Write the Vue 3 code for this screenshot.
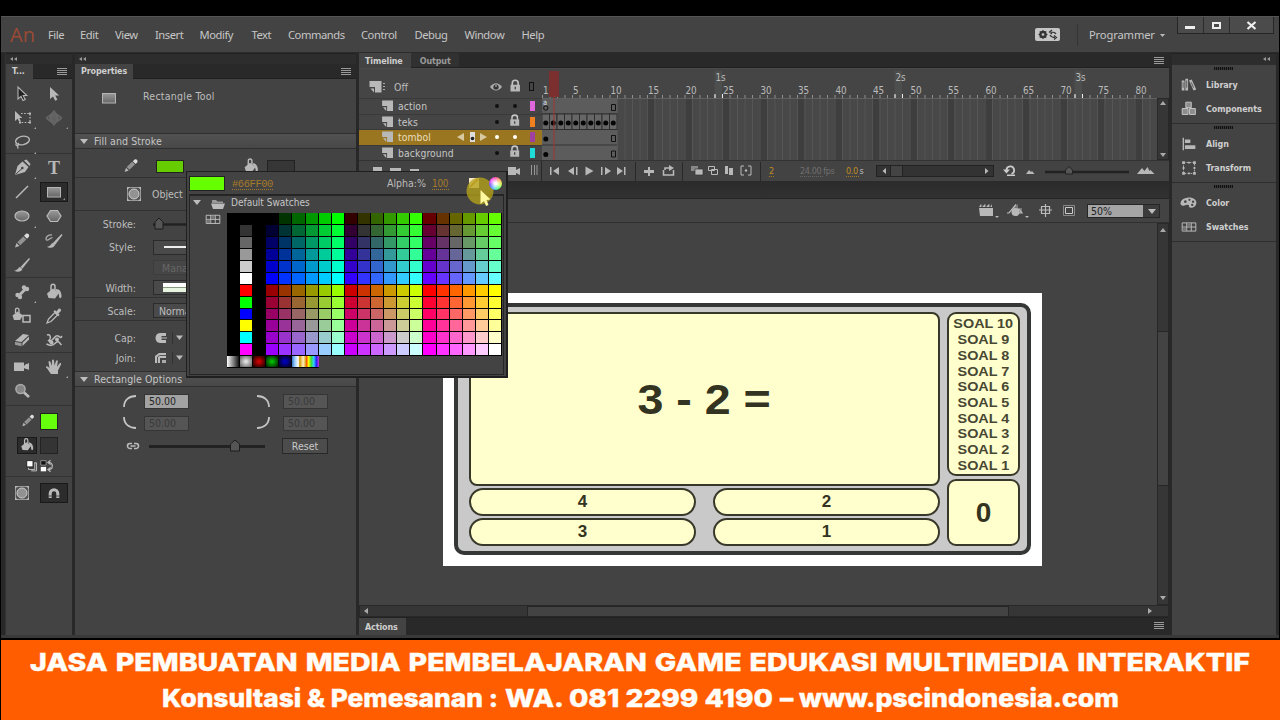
<script setup>
const menu = [
  ['File', 32], ['Edit', 35], ['View', 40], ['Insert', 44.5], ['Modify', 52], ['Text', 36.5],
  ['Commands', 73], ['Control', 53.5], ['Debug', 50], ['Window', 57], ['Help', 30],
]

const g = {
  arrowDark: '<path d="M7 4v12l3-2.6 2 4.1 2.2-1-2-4h3.6z" fill="#222" stroke="#b5b5b5" stroke-width="1.1"/>',
  arrow: '<path d="M7 4v12l3-2.6 2.2 4.4 2.2-1-2.2-4.4h4z"/>',
  transform: '<path d="M4 4v10l2.5-2.2 1.8 3 1.5-.8-1.5-3h3z"/><path d="M10 6.5h9v9H9" fill="none" stroke="#bbb" stroke-width="1.2" stroke-dasharray="1.6 1.5"/><path d="M18 5.5h2v2h-2zM18 14.500h2v2h-2zM8 14.500h2v2H8z"/>',
  rotate: '<g opacity=".25"><circle cx="11" cy="11" r="5.500"/><path d="M3.500 11c3-4.500 12-4.500 15 0-3 4.500-12 4.500-15 0zM11 4c4 4 4 10 0 14-4-4-4-10 0-14z" fill="none" stroke="#ccc" stroke-width="1.400"/></g>',
  lasso: '<ellipse cx="11.500" cy="9.500" rx="7" ry="4.200" transform="rotate(-12 11.500 9.500)" fill="none" stroke="#b8b8b8" stroke-width="1.400"/><path d="M6 12c-2 1-1 3 .8 2.500 1.200-.5 1-2 .2-2.500M6.500 14.500l.5 3.200" fill="none" stroke="#b8b8b8" stroke-width="1.300"/>',
  pen: '<path d="M4 18l2.500-9 5-4.500L17.500 10 14 15z"/><path d="M13 3.500l2.500-1 4 4.500-1 2z"/><path d="M4.500 17.500l6.500-6" stroke="#444" stroke-width="1"/><circle cx="11.300" cy="11" r="1.300" fill="#444"/>',
  text: '<text x="11" y="17" text-anchor="middle" font-family="Liberation Serif,serif" font-size="18" font-weight="bold">T</text>',
  line: '<path d="M5 17L17 5" stroke="#bbb" stroke-width="1.500"/>',
  rect: '<rect x="4.500" y="6.500" width="13" height="9.500" fill="url(#gg)" stroke="#b5b5b5"/>',
  oval: '<ellipse cx="11" cy="11" rx="7" ry="5" fill="url(#gg)" stroke="#bbb" stroke-width="1.200"/>',
  poly: '<path d="M7.500 5.500h7l3.500 5.500-3.500 5.500h-7L4 11z" fill="url(#gg)" stroke="#bbb" stroke-width="1.200"/>',
  pencil: '<path d="M4 17.500l1.500-4.500 3 3z"/><path d="M6.300 12.200l6-5.800 3 3-6 5.800z" fill="#929292"/><path d="M13 5.700l2-1.900c1.800-1.200 4 1.200 2.900 3L16 8.700z" fill="#ddd"/>',
  brushLine: '<path d="M9 14L18.500 4l1 1L12 15z"/><path d="M4 17c5 2 7 0 8-2l-3-2c-1 1-1 3-5 4z"/><path d="M9 5C4 4 2 9 3.500 10c2 1 4-3 6-2" fill="none" stroke="#aaa" stroke-width="1.300"/>',
  brush: '<path d="M9.500 13L18 4l1 1-7.500 9.500z"/><path d="M3 16.800c5 2.200 7.500.2 8.500-1.800l-2.500-2c-1.500 0-1.500 3-6 3.800z"/>',
  bone: '<path d="M7 13.500L13.500 7l2 2L9 15.500z"/><circle cx="13" cy="6.500" r="2.200"/><circle cx="16" cy="8" r="2.200"/><circle cx="6.500" cy="14" r="2.200"/><circle cx="9" cy="16" r="2.200"/>',
  bucket: '<path d="M4 12.500l6-5 6 4.500-4 5.500-6.500-.5z"/><path d="M8 10V5.500c0-3 4-3 4 0v4" fill="none" stroke="#bbb" stroke-width="1.500"/><path d="M13 8c4 0 5 3 5.500 6 .5 4-2.500 4-2.500 1 0-2-1-4-3-5z"/>',
  inkBottle: '<path d="M1.500 10.500l5-4 5.500 4-3 4.500H3z"/><path d="M4.500 8V5c0-2.500 3.500-2.500 3.500 0v3" fill="none" stroke="#bbb" stroke-width="1.300"/><rect x="12" y="10.500" width="7" height="6.500" fill="none" stroke="#bbb" stroke-width="1.500"/>',
  dropper: '<path d="M4 18l1.500-4L12 7.500l2.500 2.500L8 16.500z" fill="none" stroke="#bbb" stroke-width="1.300"/><path d="M10.500 6.500l1.400-1.400 1.500 1.300 2-2.500c1.500-1.200 3.600.8 2.400 2.400l-2.400 2.100 1.300 1.500-1.500 1.400z"/>',
  eraser: '<path d="M4 12L12 5l6 1-7.500 7z"/><path d="M4 13l6.500 1v3.300L4 15.700z" fill="#999"/><path d="M11.500 13.700L18 7.500v3L11.500 17z"/>',
  widthTool: '<path d="M4 6c3-1 4 2 3 4s-1 3 2 1 3-5 6-4 2 3 4 0M3.500 15c4 2 6 2 9-1s4 0 6 2M5 11l4 4" fill="none" stroke="#bbb" stroke-width="1.500"/><circle cx="8.500" cy="13.500" r="2"/><circle cx="14" cy="10.500" r="2"/>',
  camera: '<path d="M3 6.500h10v8.500H3zM13 10l2-2h1l2-1v7l-2-1h-1l-2-1z"/>',
  hand: '<path d="M8 18c-2-2-3-5-5-6.500 0-2 2-1.500 3.500 1L5.500 6c.4-1.500 1.600-1.200 2 0l1.300 4L9 4.500c.3-1.500 1.800-1.500 2 0l.5 5 1.500-4.500c.6-1.300 2-.8 1.800.5L14 10.800l2.500-3.300c1-1 2-.2 1.500 1L15 14.500V18z"/>',
  zoom: '<circle cx="9.500" cy="9" r="4.600" fill="#858585" stroke="#aaa" stroke-width="1.500"/><path d="M13 12.500l5 4.500" stroke="#bbb" stroke-width="2.600"/>',
  object: '<path d="M4.500 4.500h13v13h-13z" fill="#555" stroke="#999"/><circle cx="11" cy="11" r="5" fill="#929292" stroke="#ccc"/><path d="M4 4h3L4 7zM18 4h-3l3 3zM4 18h3l-3-3zM18 18h-3l3-3z"/>',
  magnet: '<path d="M7.200 16v-4.500a3.800 3.800 0 0 1 7.600 0V16" fill="none" stroke="#bbb" stroke-width="3"/><path d="M5.500 14h3.400M13.100 14h3.400" stroke="#333" stroke-width=".8"/>',
  reset: '<rect x="4" y="5" width="7" height="7" fill="#fff" stroke="#222"/><path d="M13 7v8H6v-2M13 7.500h2v9H9" fill="none" stroke="#ccc"/>',
  swap: '<path d="M4 5h6v5H4z" fill="#111" stroke="#999"/><path d="M4 12h6v5H4z" fill="#fff"/><path d="M12 7h2c4 1 4 7 0 8h-2M15 4.500L12 7l3 2.500M15 12.500L12 15l3 2.500" fill="none" stroke="#bbb" stroke-width="1.300"/>',
  library: '<path d="M3 6h3v11H3zM7 4h3v13H7zM11 6l3-1 5 11-3 1z"/><path d="M4.500 8v6M8.500 6v8M13.500 8l2.500 6" stroke="#555"/>',
  components: '<path d="M7.500 3.500h6v6h-6zM3.500 10.500h6.500V17H3.500zM11.500 10.500H18V17h-6.500z" fill="#8d8d8d" stroke="#ccc"/>',
  align: '<path d="M4 4h1.500v14H4zM6.500 6h6v4h-6zM6.500 12.500H18v4H6.500z"/>',
  transformPanel: '<rect x="5" y="5" width="12" height="12" fill="none" stroke="#bbb" stroke-dasharray="2 1.300"/><path d="M3.500 3.500h3v3h-3zM15.500 3.500h3v3h-3zM3.500 15.500h3v3h-3zM15.500 15.500h3v3h-3zM10 4h2v2h-2zM10 16h2v2h-2zM4 10h2v2H4zM16 10h2v2h-2z"/>',
  color: '<path d="M11 5c5 0 9 3 8 7-1 3-4 5-7 4-2-.8 0-2-2-3-3-1-5 3-8 0C.500 9 5 5 11 5z"/><circle cx="7" cy="9.500" r="1.400" fill="#444"/><circle cx="11.500" cy="7.500" r="1.200" fill="#444"/><circle cx="15.500" cy="9.500" r="1.300" fill="#444"/><circle cx="14.500" cy="13" r="1.300" fill="#444"/>',
  swatches: '<path d="M3.500 6.500h15v9h-15z" fill="none" stroke="#c5c5c5"/><path d="M3.500 11h15M8.500 6.500v9M13.500 6.500v9" stroke="#c5c5c5"/><path d="M9 7h4v3.500H9zM4 11.500h4V15H4z" fill="#777"/>',
  layer: '<path d="M4.500 5h12v11.500H10V11H4.500z"/><path d="M5.500 12.500h3.500v4z"/>',
  lock: '<path d="M6 9.500h10.500V17H6z"/><path d="M8 10V7.500c0-4 6.500-4 6.500 0V10" fill="none" stroke="#c4c4c4" stroke-width="1.800"/><path d="M10.600 11.800h1.300v2.800h-1.300z" fill="#333"/>',
  eye: '<path d="M5 11c3.500-5 8.500-5 12 0-3.500 4.500-8.500 4.500-12 0z" fill="#aaa"/><circle cx="11" cy="11" r="2.600" fill="#333"/><circle cx="11" cy="10" r=".8" fill="#ddd"/>',
}

const toolGroups = [
  { cls: 'tg1', items: [['arrowDark'], ['arrow'], ['transform', 1], ['rotate', 1], ['lasso', 1]] },
  { cls: 'tg2', items: [['pen', 1], ['text'], ['line'], ['rect', 1, 1], ['oval', 1], ['poly'], ['pencil'], ['brushLine'], ['brush']] },
  { cls: 'tg3', items: [['bone', 1], ['bucket'], ['inkBottle'], ['dropper'], ['eraser'], ['widthTool']] },
  { cls: 'tg4', items: [['camera'], ['hand', 1], ['zoom']] },
]

const layers = [
  { name: 'action', color: '#e066dc', lock: false },
  { name: 'teks', color: '#f08020', lock: true },
  { name: 'tombol', color: '#a040a0', lock: false, on: true },
  { name: 'background', color: '#20dcd8', lock: true },
]

const FW = 7.5
const frames = Array.from({ length: 82 }, (_, i) => i)
const marks = [1, 5, 10, 15, 20, 25, 30, 35, 40, 45, 50, 55, 60, 65, 70, 75, 80]
const seconds = [[24, '1s'], [48, '2s'], [72, '3s']]

const levels = [0, 51, 102, 153, 204, 255]
const special = ['#000', '#333', '#666', '#999', '#ccc', '#fff', '#f00', '#0f0', '#00f', '#ff0', '#0ff', '#f0f']
const palette = []
for (let r = 0; r < 12; r++) {
  palette.push('#000', special[r], '#000')
  for (let k = 0; k < 3; k++)
    for (let c = 0; c < 6; c++)
      palette.push(`rgb(${levels[(r < 6 ? 0 : 3) + k]},${levels[c]},${levels[r % 6]})`)
}

const dock = [
  [['library', 'Library'], ['components', 'Components']],
  [['align', 'Align'], ['transformPanel', 'Transform']],
  [['color', 'Color'], ['swatches', 'Swatches']],
]
const soal = [10, 9, 8, 7, 6, 5, 4, 3, 2, 1]
</script>

<template>
  <div class="screen">
    <svg class="defs"><defs><linearGradient id="gg" x2="0" y2="1"><stop stop-color="#999" /><stop offset="1" stop-color="#666" /></linearGradient></defs></svg>
    <div class="window">
      <header class="menubar">
        <span class="logo">An</span>
        <nav><span v-for="m in menu" :key="m[0]" :style="{ width: m[1] + 'px' }">{{ m[0] }}</span></nav>
        <svg class="sync" width="25" height="13"><rect width="25" height="13" rx="2" fill="#c4c4c4" /><circle cx="8" cy="6.500" r="2.800" fill="none" stroke="#333" stroke-width="2" /><path d="M8 2v9M3.500 6.500h9M4.800 3.300l6.400 6.400M11.200 3.300l-6.400 6.400" stroke="#333" stroke-width="1.100" /><circle cx="8" cy="6.500" r="1.300" fill="#c4c4c4" /><path d="M21 6c-1-2-3-2-5-2M17 2l-2.500 2L17 6M15 7c1 2 3 2.500 5 2.500M19 7.500l2.500 2-2.500 2" stroke="#333" stroke-width="1.200" fill="none" /></svg>
        <i class="vsep"></i>
        <span class="workspace">Programmer</span>
        <svg class="wsarrow" width="6" height="4"><path d="M0 0h5L2.500 3z" fill="#bbb" /></svg>
        <div class="winbtns">
          <svg width="25" height="16"><path d="M7 9h10v3H7z" fill="#eee" /></svg>
          <svg width="26" height="16"><rect x="9" y="6" width="7" height="5" fill="none" stroke="#eee" stroke-width="2" /></svg>
          <svg width="44" height="16"><path d="M17.500 5l8 7M25.500 5l-8 7" stroke="#eee" stroke-width="2.200" /></svg>
        </div>
      </header>

      <main>
        <aside class="tools">
          <div class="strip"><svg width="8" height="6"><path d="M3 1v4L0 3zM7 1v4L4 3z" fill="#999" /></svg></div>
          <div class="tabs"><b class="tab t0">T...</b><i class="burger"></i></div>
          <div v-for="grp in toolGroups" :key="grp.cls" class="tgroup" :class="grp.cls">
            <span v-for="t in grp.items" :key="t[0]" class="tool" :class="{ sel: t[2], more: t[1] }"><svg width="22" height="22" v-html="g[t[0]]"></svg></span>
          </div>
          <div class="colors">
            <div class="crow"><svg width="18" height="18" viewBox="0 0 22 22" v-html="g.pencil"></svg><i class="csw green"></i></div>
            <div class="crow"><span class="bsel"><svg width="18" height="18" viewBox="0 0 22 22" v-html="g.bucket"></svg></span><i class="csw none"></i></div>
            <div class="crow small"><svg width="16" height="16" viewBox="2 2 18 18" v-html="g.reset"></svg><svg width="16" height="16" viewBox="2 2 18 18" v-html="g.swap"></svg></div>
          </div>
          <div class="tgroup tg5">
            <span class="tool"><svg width="22" height="22" v-html="g.object"></svg></span>
            <span class="tool sel"><svg width="22" height="22" v-html="g.magnet"></svg></span>
          </div>
        </aside>

        <aside class="props">
          <div class="strip"><svg width="8" height="6"><path d="M3 1v4L0 3zM7 1v4L4 3z" fill="#999" /></svg></div>
          <div class="tabs"><b class="tab">Properties</b><i class="burger"></i></div>
          <div class="prow title"><svg width="22" height="22" v-html="g.rect"></svg><span>Rectangle Tool</span></div>
          <div class="section"><i class="tri"></i>Fill and Stroke</div>
          <div class="prow fill">
            <svg width="20" height="20" viewBox="0 0 22 22" v-html="g.pencil"></svg><i class="chip lime"></i>
            <svg class="bk" width="20" height="20" viewBox="0 0 22 22" v-html="g.bucket"></svg><i class="chip"></i>
          </div>
          <div class="prow object"><svg width="22" height="22" v-html="g.object"></svg><span>Object</span></div>
          <div class="prow r-stroke"><label>Stroke:</label><svg class="ctl" width="60" height="14"><path d="M0 7.500h60" stroke="#222" stroke-width="2.500" /><path d="M2 12V5l4-4 4 4v7z" fill="#555" stroke="#1d1d1d" /></svg></div>
          <div class="prow r-style"><label>Style:</label><span class="ctl box"><i class="wline"></i></span></div>
          <div class="prow r-man"><label></label><span class="ctl box dim">Manage</span></div>
          <div class="prow r-width"><label>Width:</label><span class="ctl box"><i class="wline thick"></i></span></div>
          <div class="prow r-scale"><label>Scale:</label><span class="ctl box">Normal</span></div>
          <div class="prow r-cap"><label>Cap:</label><svg class="ctl2" width="34" height="12"><path d="M13 1H7C1 1 1 11 7 11h6V8H8.500V4H13z" fill="#bbb" /><path d="M7 6h7" stroke="#bbb" /><path d="M19.500 0v12" stroke="#333" /><path d="M23 3.500h7L26.500 8z" fill="#bbb" /></svg></div>
          <div class="prow r-join"><label>Join:</label><svg class="ctl2" width="34" height="12"><path d="M13 1H6L2 4v7h5V6h6z" fill="#bbb" /><path d="M4.500 11V5l2-1.500H13" fill="none" stroke="#555" /><path d="M9 8h4v3H9z" fill="#aaa" /><path d="M19.500 0v12" stroke="#333" /><path d="M23 3.500h7L26.500 8z" fill="#bbb" /></svg></div>
          <div class="section sec2"><i class="tri"></i>Rectangle Options</div>
          <div class="prow corner c1"><svg width="16" height="14"><path d="M2 13C2 6 7 2 14 2" /></svg><span class="num on">50.00</span><svg class="rt" width="16" height="14"><path d="M1 2c7 0 12 4 12 11" /></svg><span class="num">50.00</span></div>
          <div class="prow corner"><svg width="16" height="14"><path d="M2 1c0 7 5 11 12 11" /></svg><span class="num">50.00</span><svg class="rt" width="16" height="14"><path d="M1 12c7 0 12-4 12-11" /></svg><span class="num">50.00</span></div>
          <div class="prow link">
            <svg width="14" height="8"><path d="M6 1.500H4a2.300 2.300 0 0 0 0 5h2M8 1.500h2a2.300 2.300 0 0 1 0 5H8M4.500 4h5" fill="none" stroke="#bbb" stroke-width="1.600" /></svg>
            <svg class="sl" width="116" height="14"><path d="M0 7.500h116" stroke="#222" stroke-width="2.800" /><path d="M81.500 12V5l4.500-4 4.500 4v7z" fill="#555" stroke="#1d1d1d" /></svg>
            <span class="btn">Reset</span>
          </div>
        </aside>

        <section class="center">
          <div class="tabs ctabs"><b class="tab">Timeline</b><b class="tab off">Output</b><i class="burger"></i></div>
          <div class="timeline">
            <div class="layers">
              <div class="lhead"><svg width="22" height="22" viewBox="0 0 22 22" v-html="g.layer"></svg><i class="dots"></i><span>Off</span><svg class="eyeh" width="22" height="22" v-html="g.eye"></svg><svg class="lk" width="18" height="18" viewBox="1 2 20 20" v-html="g.lock"></svg><i class="outl"></i></div>
              <div v-for="l in layers" :key="l.name" class="layer" :class="{ on: l.on }">
                <svg class="lico" width="20" height="20" viewBox="0 0 22 22" v-html="g.layer"></svg><span class="lname">{{ l.name }}</span>
                <svg v-if="l.on" class="keys" width="30" height="12"><path d="M0 6l7-4v8zM30 6l-7-4v8z" fill="#d8c9a0" /><path d="M13 1h5v10h-5z" fill="#ddd" /><circle cx="15.500" cy="7.500" r="1.800" fill="#222" /></svg>
                <i class="dot d1"></i>
                <svg v-if="l.lock" class="lk2" width="17" height="17" viewBox="1 2 20 20" v-html="g.lock"></svg><i v-else class="dot d2"></i>
                <i class="lcol" :style="{ background: l.color }"></i>
              </div>
            </div>
            <svg class="frames" width="615" height="92">
              <rect v-for="s in seconds" :key="s[1]" :x="(s[0] - 1) * FW" y="2" :width="FW" height="27" fill="#4c4f4d" />
              <rect v-for="f in frames" :key="f" :x="f * FW" y="29" :width="FW" height="63" :fill="(f + 1) % 5 ? '#484848' : '#3e3e3e'" />
              <path v-for="f in frames" :key="'l' + f" :d="`M${f * FW + .5} 30v61`" stroke="#595959" stroke-width=".8" />
              <path v-for="f in frames" :key="'t' + f" :d="`M${f * FW + .5} 26v3`" stroke="#999" stroke-width=".9" />
              <path v-for="s in seconds" :key="'w' + s[1]" :d="`M${(s[0] - 1) * FW + .5} 25v4m7.500-4v4`" stroke="#eee" />
              <path d="M0 29.500h615M0 91.500h615" stroke="#606060" />
              <rect y="30" width="75" height="61" fill="#5c5c5c" />
              <path d="M0 45h75M0 60.500h75M0 76h75" stroke="#343434" />
              <g v-for="i in 10" :key="i"><rect :x="(i - 1) * FW" y="45" :width="FW" height="15.500" fill="#666" stroke="#2c2c2c" stroke-width=".9" /><circle :cx="(i - .5) * FW" cy="54" r="2.500" fill="#050505" /></g>
              <circle cx="3.800" cy="39" r="2.200" fill="none" stroke="#111" /><text x="1" y="36" class="act">a</text>
              <circle cx="3.800" cy="70" r="2.500" fill="#050505" /><circle cx="3.800" cy="85.500" r="2.500" fill="#050505" />
              <path d="M69.500 35.500h4v6h-4zM69.500 66.500h4v6h-4zM69.500 82h4v6h-4z" fill="none" stroke="#111" />
              <rect x="7" y="2" width="10" height="26" fill="#7c2f2f" /><path d="M12 27v65" stroke="#a23434" />
              <text v-for="m in marks" :key="m" :x="(m - 1) * FW + 1" y="25">{{ m }}</text>
              <text v-for="s in seconds" :key="'s' + s[1]" :x="(s[0] - 1) * FW + 1" y="11.500">{{ s[1] }}</text>
            </svg>
            <div class="tlscroll"><i class="up"></i><i class="down"></i></div>
          </div>
          <div class="tlbar">
            <svg width="810" height="21" fill="#bbb">
              <path d="M14 6h9v7h-9zM31 7h11v7H31zM51 8h9v6h-9zM149 6h8v8h-8zM157 9l4-2v7l-4-2z" />
              <path d="M175.500 4v10M178.500 4v10M181 4v10" stroke="#999" transform="translate(-3 0)" /><path d="M182.500 0v21M276.500 1v19M323.500 1v19M401.500 1v19" stroke="#292929" />
              <path d="M191 6h1.500v8H191zM200 6v8l-6-4zM209 10l6-4v8zM217 6h1.500v8H217zM226.500 5.500l8 4.500-8 4.500zM242 6h1.500v8H242zM246 6v8l6-4zM258 6v8l6-4zM265 6h1.500v8H265z" />
              <path d="M285 9h4V6h2v3h4v3h-4v3h-2v-3h-4z" /><path d="M304.500 9v5h10V9M306 9V7h5" fill="none" stroke="#bbb" stroke-width="1.500" /><path d="M310 4l5 3-5 3z" />
              <path d="M332 5h7v5h-7z" fill="#888" /><path d="M336 8h8v6h-8z" stroke="#333" stroke-width=".7" /><path d="M349.500 5.500h6v4h-6zM352.500 8.500h6v5h-6z" fill="none" stroke="#bbb" /><path d="M366 5h3v8h-3zM370 7h4v7h-4z" /><path d="M385 5h-3v9h3M389 5h3v9h-3" fill="none" stroke="#bbb" /><circle cx="387" cy="9.500" r="1.200" />
              <text x="410" y="13" class="or">2</text><path d="M410 15.500h6" stroke="#a77a1e" stroke-dasharray="1 1" />
              <text x="441" y="13" class="fps">24.00 fps</text><path d="M441 15.500h24" stroke="#666" stroke-dasharray="1 1" />
              <text x="487" y="13" class="or">0.0</text><text x="500.500" y="13" class="s">s</text><path d="M487 15.500h13" stroke="#a77a1e" stroke-dasharray="1 1" />
              <rect x="517.500" y="4.500" width="117" height="11" fill="#333" stroke="#222" /><rect x="531.500" y="4.500" width="12" height="11" fill="#444" stroke="#222" /><path d="M527 7v6l-3.500-3zM626 7v6l3.500-3z" />
              <path d="M647.500 9a3.800 3.800 0 1 1 5 3.800" fill="none" stroke="#ccc" stroke-width="1.800" /><path d="M644 8.500h7l-3.500 4zM648 13.500h8V15h-8z" fill="#ccc" />
              <path d="M667 13l3-4 2 2 1-1 2.500 3zM778 13l5-6 2.500 3 3-4 2 4 1-1 4 4z" /><path d="M686 11h84" stroke="#222" stroke-width="2.500" /><path d="M706.500 13V9l3.500-3.500L713.500 9v4z" fill="#555" stroke="#222" />
            </svg>
          </div>
          <div class="docbar"></div>
          <div class="editbar">
            <svg width="106" height="20" fill="#bbb"><path d="M2 7h14v8H3zM2 6l2-3 2 2 2-2 2 2 2-2 2 2 1-2v3z" /><path d="M18 15h4l-2 2zM48 15h4l-2 2z" /><path d="M5 3.500v3M9 3.500v3M13 3.500v3" stroke="#333" /><path d="M36 6l5-3v4h4v5h-5z" fill="#777" /><circle cx="38.500" cy="11" r="4" /><path d="M39 3.500l-7 8.500h-2M42 8l3 4h-3" fill="none" stroke="#bbb" stroke-width="1.200" /><path d="M62 9h13M68.500 3v13M64.500 5.500h8v7h-8z" fill="none" stroke="#bbb" stroke-width="1.200" /><path d="M86.500 4.500h11v10h-11z" fill="none" stroke="#888" /><path d="M88.500 6.500h7v6h-7z" fill="none" stroke="#ccc" /></svg>
            <div class="zoomsel"><span>50%</span><i class="tri"></i></div>
          </div>
          <div class="work">
            <div class="viewport">
              <div class="stage"><div class="device">
                <div class="left">
                  <div class="question"><span>3 - 2 =</span></div>
                  <div class="answers"><span>4</span><span>2</span><span>3</span><span>1</span></div>
                </div>
                <div class="side">
                  <div class="list"><span v-for="n in soal" :key="n">SOAL {{ n }}</span></div>
                  <div class="score">0</div>
                </div>
              </div></div>
            </div>
            <div class="vscroll"><i class="up"></i><i class="thumb"></i><i class="down"></i></div>
          </div>
          <div class="hscroll"><i class="lt"></i><i class="thumb"></i><i class="rt"></i></div>
          <div class="tabs atabs"><b class="tab">Actions</b><i class="burger"></i></div>
        </section>

        <aside class="dock">
          <div class="strip"><svg width="8" height="6"><path d="M3 1v4L0 3zM7 1v4L4 3z" fill="#999" /></svg></div>
          <div v-for="(d, i) in dock" :key="i" class="dgroup">
            <i class="grip"></i>
            <div v-for="p in d" :key="p[0]" class="ditem"><svg width="20" height="20" viewBox="0 0 22 22" v-html="g[p[0]]"></svg><b>{{ p[1] }}</b></div>
          </div>
        </aside>
      </main>
    </div>

    <div class="popup">
      <div class="phead"><i class="current"></i><span class="hex">#66FF00</span><span class="alpha">Alpha:%</span><span class="hex a100">100</span>
        <svg width="32" height="16"><rect x="2" y="3" width="10" height="10" fill="#f5e5c0" /><path d="M3 12l8-8" stroke="#d07020" stroke-width="1.500" /></svg></div>
      <div class="pbody">
        <div class="pfolder"><i class="tri"></i><svg width="14" height="11"><path d="M1 2h4l1.500 1.500H12V5H1z" fill="#999" /><path d="M0 5.500h14L12 11H2z" fill="#bbb" /></svg><span>Default Swatches</span></div>
        <div class="pgrid">
          <svg width="20" height="20" viewBox="0 4 22 22" v-html="g.swatches"></svg>
          <div>
            <div class="palette"><i v-for="(c, i) in palette" :key="i" :style="{ background: c }"></i></div>
            <div class="grads"><i v-for="n in 7" :key="n" :class="'g' + n"></i></div>
          </div>
        </div>
      </div>
      <svg class="cursor" width="28" height="34"><circle cx="14" cy="14" r="13.500" fill="#b5a31a" fill-opacity=".78" /><path d="M14.500 13v14l3.500-3 2 5 2.500-1-2-5 4-.5z" fill="#fff9a0" /></svg>
      <i class="wheel"></i>
    </div>

    <footer>
      <svg width="1279" height="80">
        <text x="29" y="31" textLength="1220" lengthAdjust="spacingAndGlyphs" class="wide">JASA PEMBUATAN MEDIA PEMBELAJARAN GAME EDUKASI MULTIMEDIA INTERAKTIF</text>
        <text x="161" y="67" textLength="336" lengthAdjust="spacingAndGlyphs">Konsultasi &amp; Pemesanan :</text>
        <text x="504" y="67" textLength="268" lengthAdjust="spacingAndGlyphs">WA. 081 2299 4190</text>
        <text x="779" y="67" textLength="339" lengthAdjust="spacingAndGlyphs">– www.pscindonesia.com</text>
      </svg>
    </footer>
  </div>
</template>

<style>
body { margin: 0; background: #000; overflow: hidden; }
</style>

<style scoped>
* { box-sizing: border-box; }
.screen { position: relative; width: 1280px; height: 720px; background: #000; padding-top: 16px; overflow: hidden; color: #c6c6c6; font: 10.5px/14px "DejaVu Sans Condensed", "DejaVu Sans", sans-serif; font-stretch: condensed; }
.defs { position: absolute; width: 0; height: 0; }
svg { display: block; flex: none; overflow: visible; fill: #b8b8b8; }
i { flex: none; display: block; }
span, b { white-space: nowrap; }
.window { margin-left: 1px; width: 1278px; height: 621px; background: #434343; border-top: 1px solid #555; }
.menubar { height: 36px; display: flex; align-items: center; position: relative; border-bottom: 1px solid #2b2b2b; font: 11.2px/18px "Noto Sans", sans-serif; letter-spacing: -.45px; }
.logo { width: 47px; padding-left: 9px; color: #9a4a35; font: 500 20px/24px "Open Sans", sans-serif; letter-spacing: 0; }
nav { display: flex; width: 987px; }
.vsep { width: 1px; height: 22px; margin: 0 11px 0 17px; background: #333; }
.workspace { letter-spacing: -.15px; width: 61px; }
.wsarrow { margin: 3px 0 0 10px; }
.winbtns { position: absolute; top: 0; right: 5px; display: flex; border: 1px solid #252525; border-top: 0; background: #4b4b4b; }
.winbtns svg + svg { border-left: 1px solid #2c2c2c; }
main { display: flex; height: 585px; padding-left: 4px; background: #282828; gap: 3px; border-bottom: 3px solid #393939; }
.strip { height: 11px; background: #2d2d2d; border-top: 1px solid #222; padding: 2px 0 0 4px; }
.tabs { display: flex; height: 15px; background: #292929; align-items: stretch; border-bottom: 1px solid #202020; }
.tab { background: #434343; padding: 0 8px 0 6px; height: 16px; font-size: 8.9px; line-height: 15px; color: #cfcfcf; letter-spacing: -.1px; }
.props .tab { width: 58px; }
.burger { margin: 4px 5px 0 auto; width: 10px; height: 7px; background: repeating-linear-gradient(#9a9a9a 0 1px, transparent 1px 2px); }
.tools, .props { background: #434343; }
.tools { width: 67px; border-left: 1px solid #333; }
.tools .t0 { width: 27px; padding: 0 0 0 6px; }
.tgroup { display: grid; grid-template-columns: 32px 32px; grid-auto-rows: 24.2px; border-bottom: 1px solid #333; }
.tg1 { padding: 3px 0 0; height: 75px; }
.tg2 { padding-top: 2px; height: 124px; }
.tg3 { padding-top: 2px; height: 75px; }
.tg4 { padding-top: 2px; height: 53px; }
.tg5 { padding-top: 4px; border: 0; }
.tool { display: flex; align-items: center; justify-content: center; position: relative; }
.tool.sel { background: #2c2c2c; border: 1px solid #191919; width: 28px; height: 20px; margin: 2px 0 0 2px; }
.tool.more::after { content: ""; position: absolute; right: 2px; bottom: 1px; border: 1.5px solid transparent; border-right-color: #aaa; border-bottom-color: #aaa; }
.tool.more:nth-child(4)::after { opacity: .8; }
.colors { height: 71px; border-bottom: 1px solid #333; padding: 3px 0 0 11px; }
.crow { display: flex; height: 24px; align-items: center; }
.crow > svg { margin: 0 2px 0 2px; }
.csw { width: 18px; height: 17px; border: 1px solid #222; background: #343434; }
.green { background: #66ff0c; }
.crow > i { margin-left: 1px; }
.bsel { width: 20px; height: 17px; display: flex; align-items: center; justify-content: center; background: #2c2c2c; border: 1px solid #191919; margin-right: 2px; }
.small { height: 18px; padding-left: 8px; }
.small > svg { margin: 0 -2px 0 0; }

.props { width: 281px; }
.prow { display: flex; align-items: center; color: #bdbdbd; font-size: 10.5px; }
.title { height: 54px; padding: 0 0 21px 23px; letter-spacing: .25px; }
.title svg { margin-top: 4px; }
.title span { margin-left: 23px; }
.section { height: 16px; display: flex; align-items: center; gap: 6px; padding-left: 5px; background: linear-gradient(#515151, #484848); border: 1px solid #2f2f2f; border-width: 1px 0; color: #c6c6c6; font-size: 10.5px; letter-spacing: .1px; }
.tri { width: 0; height: 0; border: 4px solid transparent; border-top: 5px solid #bdbdbd; border-bottom: 0; }
.fill { height: 29px; padding: 6px 0 0 46px; border-bottom: 1px solid #313131; }
.chip { width: 28px; height: 13px; margin-left: 16px; background: #363636; border: 1px solid #222; }
.lime { background: #66cc00; margin-left: 15px; }
.bk { margin-left: 57px; }
.fill .chip:last-child { margin-left: 6px; }
.object { height: 33px; padding-left: 48px; border-bottom: 1px solid #313131; }
.object span { margin-left: 7px; }
label { width: 61px; text-align: right; margin-right: 17px; }
.box { width: 62px; height: 15px; border: 1px solid #2b2b2b; background: #4a4a4a; padding-left: 5px; line-height: 14px; display: flex; align-items: center; }
.dim { color: #666; border-color: #3c3c3c; padding-left: 8px; background: #464646; }
.r-stroke { height: 26px; } .r-style { height: 20px; } .r-man { height: 21px; }
.r-width { height: 20px; border-bottom: 1px solid #313131; }
.r-scale { height: 23px; border-bottom: 1px solid #313131; padding-top: 3px; }
.r-cap { height: 28px; padding-top: 6px; } .r-join { height: 22px; padding-bottom: 5px; }
.wline { width: 60px; height: 2px; margin-left: 5px; background: #eee; }
.thick { height: 9px; background: linear-gradient(#fff 0 4px, #8a9a80 4px 5px, #e8f5e0 5px); margin-left: 4px; }
.corner { height: 22px; padding-left: 47px; }
.c1 { margin-top: 3px; }
.corner svg path { fill: none; stroke: #c4c4c4; stroke-width: 1.8; }
.num { width: 45px; height: 15px; border: 1px solid #353535; background: #555; color: #3a3a3a; margin-left: 6px; padding-left: 4px; line-height: 13px; }
.num.on { background: #a2a2a2; color: #252525; }
.rt { margin-left: 67px; }
.corner .num:last-child { margin-left: 11px; }
.link { height: 24px; padding-left: 51px; }
.sl { margin-left: 9px; }
.btn { margin-left: 17px; width: 46px; height: 16px; border: 1px solid #282828; background: #4c4c4c; text-align: center; line-height: 14px; color: #c8c8c8; }

.center { width: 810px; display: flex; flex-direction: column; background: #434343; }
.ctabs .tab { line-height: 17px; }
.tab.off { background: #313131; color: #999; padding-left: 9px; height: 14px; }
.timeline { display: flex; height: 92px; border-top: 1px solid #4a4a4a; background: #454545; }
.layers { width: 183px; }
.lhead { height: 29px; display: flex; align-items: center; padding: 6px 0 0 6px; color: #bbb; font-size: 10.5px; }
.dots { width: 2px; height: 8px; background: repeating-linear-gradient(#aaa 0 1px, transparent 1px 3px); margin: 0 9px 0 -4px; }
.eyeh { margin-left: 75px; }
.lhead span { width: 16px; }
.lk { margin-left: -1px; }
.outl { width: 5px; height: 9px; border: 1px solid #111; margin-left: 5px; }
.layer { height: 15.500px; display: flex; align-items: center; border-top: 1px solid #3a3a3a; position: relative; color: #c6c6c6; font-size: 10.3px; padding-left: 19px; }
.layer.on { background: #9a7620; color: #e9dfbf; }
.lname { width: 57px; letter-spacing: .1px; }
.dot { width: 4px; height: 4px; border-radius: 2px; background: #111; }
.on .dot { background: #fff; }
.keys { margin-right: -32px; margin-left: 2px; }
.d1 { margin-left: 40px; }
.d2 { margin: 0 6px 0 14px; }
.lk2 { margin: 0 0 0 7px; }
.layer .lcol { margin-left: 7px; width: 5px; height: 10px; }
.layer .lk2 + .lcol { margin-left: 7px; }
.frames { width: 615px; overflow: hidden; }
.frames text { font: 9.8px "DejaVu Sans Condensed", "DejaVu Sans", sans-serif; fill: #bbb; }
.frames .act { font-size: 7.5px; fill: #d5e0ee; }
.tlscroll { margin-top: 29px; width: 12px; background: #363636; border: 1px solid #292929; display: flex; flex-direction: column; justify-content: space-between; align-items: center; padding: 2px; }
.up, .down, .lt, .hscroll .rt { width: 0; height: 0; border: 3px solid transparent; margin: 0; }
.up { border-top: 0; border-bottom: 4px solid #aaa; }
.down { border-bottom: 0; border-top: 4px solid #aaa; }
.lt { border-left: 0; border-right: 4px solid #aaa; }
.hscroll .rt { border-right: 0; border-left: 4px solid #aaa; }
.tlbar { height: 21px; border-top: 1px solid #333; }
.tlbar text { font: 9px "DejaVu Sans Condensed", "DejaVu Sans", sans-serif; letter-spacing: -.4px; }
.tlbar .or { fill: #c08a22; } .tlbar .fps { fill: #707070; } .tlbar .s { fill: #bbb; }
.docbar { height: 18px; background: linear-gradient(#2b2b2b, #313131); border-bottom: 1px solid #252525; }
.editbar { height: 24px; display: flex; align-items: center; border-bottom: 1px solid #303030; padding: 1px 0 0 618px; }
.zoomsel { display: flex; align-items: center; width: 73px; height: 14px; border: 1px solid #262626; background: #3c3c3c; margin-left: 4px; color: #222; }
.zoomsel span { background: #a5a5a5; width: 55px; padding-left: 3px; line-height: 12px; }
.zoomsel i { margin-left: 5px; }
.work { flex: 1; display: flex; min-height: 0; }
.viewport { flex: 1; padding: 70px 0 0 84px; }
.stage { width: 599px; height: 273px; background: #fff; padding: 10px 0 0 11px; }
.device { width: 577px; height: 252px; border: 4px solid #353737; border-radius: 10px; background: #c9c9c9; padding: 5px 7px 5px 11px; display: flex; justify-content: space-between; color: #333322; font-family: "Liberation Sans", Arial, sans-serif; font-weight: bold; font-stretch: normal; }
.left { width: 471px; }
.question, .answers span, .list, .score { background: #ffffce; border: 2px solid #38382a; display: flex; align-items: center; justify-content: center; }
.question { height: 174px; border-radius: 8px; font-size: 42px; padding-top: 1px; }
.question span { transform: scaleX(1.11); }
.answers { display: grid; grid-template-columns: 227px 227px; grid-auto-rows: 28px; gap: 2px 17px; margin-top: 2px; }
.answers span { border-radius: 14px; font-size: 17px; }
.side { width: 73px; }
.list { height: 164px; border-radius: 9px; flex-direction: column; font-size: 13.600px; line-height: 15.700px; color: #474733; padding-top: 2px; }
.list span { transform: scaleX(1.06); }
.score { height: 67px; border-radius: 9px; margin-top: 3px; font-size: 28px; }
.vscroll { width: 12px; background: #363636; border: 1px solid #292929; display: flex; flex-direction: column; align-items: center; padding: 4px 0; }
.vscroll .thumb { width: 12px; height: 155px; margin: 99px 0 auto; background: #434343; border: 1px solid #262626; }
.hscroll { height: 12px; display: flex; align-items: center; background: #363636; border: 1px solid #282828; padding: 0 16px 0 4px; }
.hscroll .thumb { height: 11px; width: 482px; margin: 0 auto 0 159px; background: #434343; border: 1px solid #262626; }
.atabs { height: 18px; border: 0; border-top: 1px solid #222; }
.atabs .tab { height: 17px; line-height: 19px; }
.dock { width: 104px; background: #434343; }
.dock .strip { padding-left: 91px; height: 12px; }
.dgroup { height: 59px; border-bottom: 1px solid #2d2d2d; padding-top: 2px; }
.grip { width: 19px; height: 3px; margin: 0 auto 0 42px; background: repeating-linear-gradient(90deg, #111 0 1px, #333 1px 2px); }
.ditem { height: 24px; display: flex; align-items: center; padding-left: 7px; gap: 7px; font-size: 8.9px; letter-spacing: -.05px; color: #cfcfcf; }
.grip + .ditem { margin-top: 3px; }

.popup { position: absolute; left: 186px; top: 171px; width: 322px; height: 207px; background: #434343; border: 1px solid #1f1f1f; border-width: 1px 2px 2px 1px; padding: 0 2px; }
.phead { height: 22px; display: flex; align-items: center; color: #bbb; }
.current { width: 36px; height: 15px; background: #66ff00; border: 1px solid #222; }
.hex { margin-left: 7px; color: #a77a2a; border-bottom: 1px dotted #a77a2a; line-height: 10px; width: 41px; font-family: "Liberation Mono", monospace; font-size: 10.5px; letter-spacing: -.45px; margin-top: 2px; }
.alpha { margin-left: 114px; width: 40px; }
.a100 { width: 17px; margin-left: 5px; margin-right: 18px; font-family: inherit; font-size: 9.8px; letter-spacing: -.2px; }
.wheel { position: absolute; left: 302px; top: 5px; width: 13px; height: 13px; border-radius: 50%; background: radial-gradient(#fff 10%, transparent 65%), conic-gradient(#f5a, #fa5, #cf5, #5f8, #5bf, #75f, #f5f, #f5a); }
.pbody { height: 181px; border: 1px solid #252525; border-top-width: 2px; }
.pfolder { height: 17px; display: flex; align-items: center; padding: 0 0 4px 3px; font-size: 10px; }
.pfolder svg { margin: 2px 6px 0 10px; }
.pgrid { display: flex; padding-left: 13px; }
.pgrid > div { margin-left: 4px; }
.palette { display: grid; grid-template-columns: repeat(21, 13.1px); grid-auto-rows: 11.95px; background: #000; }
.palette i { border: solid #000; border-width: 0 1px 1px 0; }
.grads { display: grid; grid-template-columns: repeat(7, 13.1px); height: 12px; width: 92px; background: #000; }
.grads i { height: 11px; margin-right: 1px; }
.g1 { background: linear-gradient(90deg, #fff, #111); }
.g2 { background: radial-gradient(#eee, #666 90%); }
.g3 { background: radial-gradient(#d00, #200 90%); }
.g4 { background: radial-gradient(#0c0, #020 90%); }
.g5 { background: radial-gradient(#00c, #002 90%); }
.grads .g6 { margin: 0; background: linear-gradient(90deg, #37c, #9cf 20%, #fff 45%, #c90 55%, #fff0c0 80%, #d90); }
.grads .g7 { margin: 0; background: linear-gradient(90deg, #f30, #ff0 20%, #3d3 40%, #3cf 60%, #22f 80%, #c3c); }
.cursor { position: absolute; left: 279px; top: 5px; }
footer { position: absolute; left: 1px; top: 640px; width: 1279px; height: 80px; background: #ff5d00; }
footer text { font-family: Inter, sans-serif; font-weight: 800; font-size: 25px; fill: #fffdf8; stroke: #fffdf8; stroke-width: .4px; }
footer .wide { word-spacing: 1.5px; }
</style>
